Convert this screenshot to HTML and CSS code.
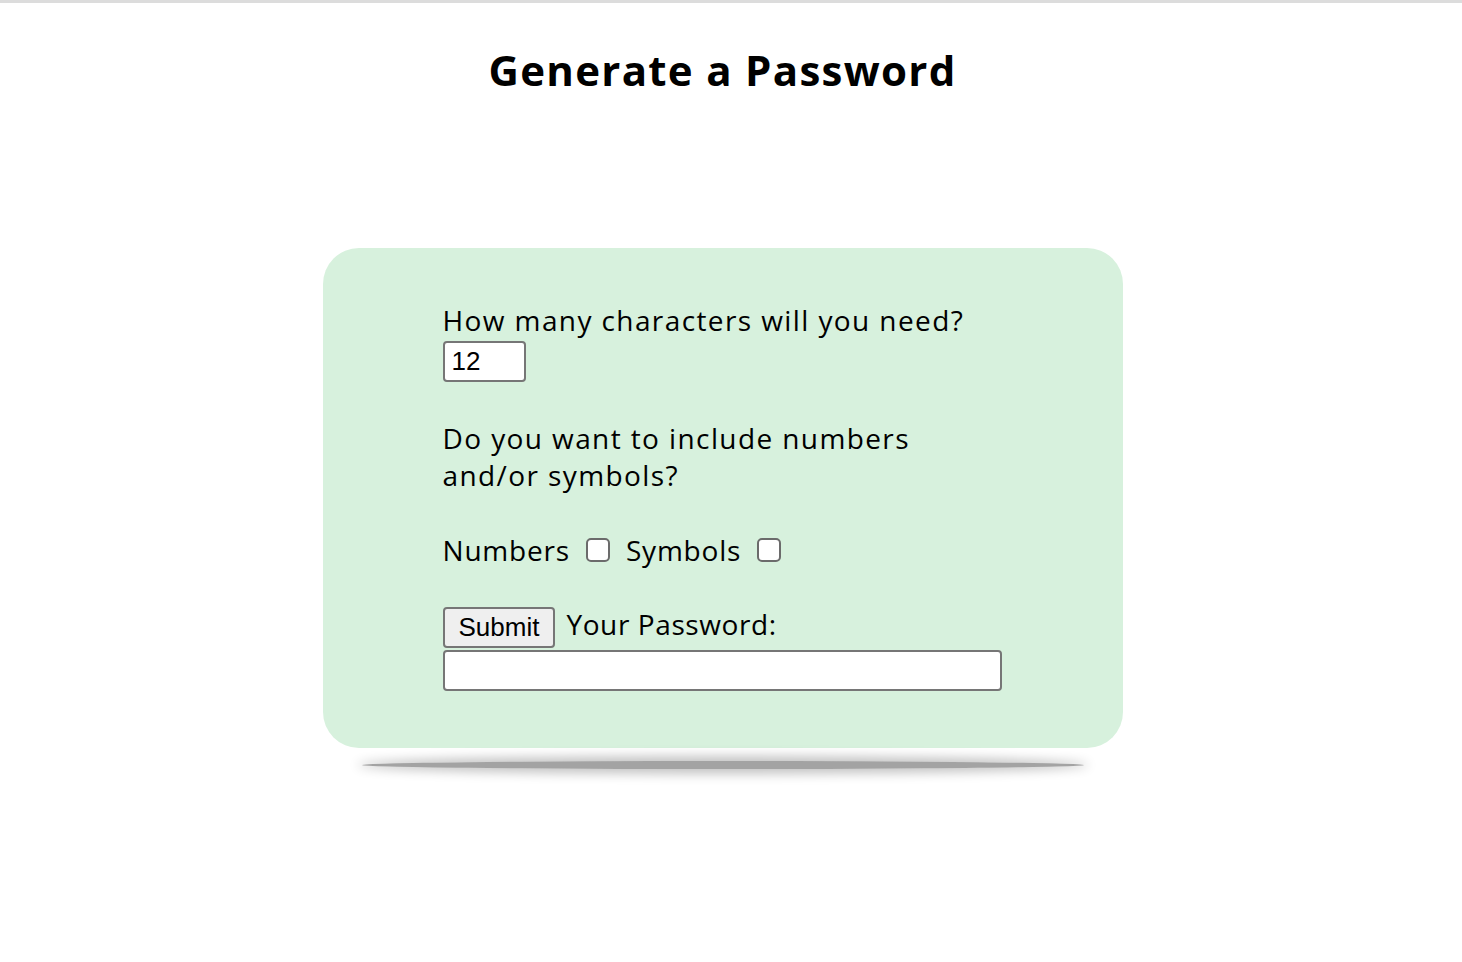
FILE: index.html
```html
<!DOCTYPE html>
<html lang="en">
<head>
<meta charset="utf-8">
<title>Generate a Password</title>
<link rel="stylesheet" href="styles.css">
</head>
<body>
<div class="topline"></div>
<div class="page">
  <h1 class="title">Generate a Password</h1>
  <main class="card">
    <form class="form" onsubmit="return false">
      <label class="question first" for="length">How many characters will you need?</label>
      <input class="num-input" id="length" type="text" value="12">
      <p class="question gap">Do you want to include numbers and/or symbols?</p>
      <div class="checks gap">
        <span>Numbers</span>
        <input class="check" type="checkbox">
        <span>Symbols</span>
        <input class="check" type="checkbox">
      </div>
      <div class="submit-row gap">
        <button class="submit-btn" type="button">Submit</button>
        <span class="pw-label">Your Password:</span>
      </div>
      <input class="pw-input" type="text">
    </form>
  </main>
  <div class="card-shadow"></div>
</div>
</body>
</html>
```

FILE: styles.css
```css
html {
  background: #ffffff;
}

body {
  margin: 0;
  padding: 0;
  min-height: 100vh;
  font-family: "Open Sans", "Noto Sans", sans-serif;
  color: #000;
}

.topline {
  height: 3px;
  background: #dcdcdc;
}

.page {
  padding: 0 17px 120px 0;
}

.title {
  margin: 42px 0 0;
  font-size: 42px;
  font-weight: 700;
  line-height: 50px;
  letter-spacing: 1.3px;
  text-align: center;
}

.card {
  box-sizing: border-box;
  width: 800px;
  margin: 153px auto 0;
  padding: 53px 120px 57px;
  background: #d7f1dd;
  border-radius: 36px;
}

.card-shadow {
  width: 722px;
  height: 8px;
  margin: 13px auto 0;
  border-radius: 50%;
  background: rgba(0, 0, 0, 0.36);
  box-shadow: 0 0 11px 5px rgba(0, 0, 0, 0.24);
}

.form {
  display: flex;
  flex-direction: column;
  align-items: flex-start;
}

.question {
  margin: 0;
  font-size: 28px;
  line-height: 37px;
  letter-spacing: 1.4px;
}

.first {
  padding-top: 1px;
}

.gap {
  margin-top: 38px;
}

.num-input,
.pw-input {
  box-sizing: border-box;
  height: 41px;
  margin: 2px 0 0;
  padding: 0 7px;
  border: 2px solid #767676;
  border-radius: 4px;
  background: #fff;
  font-family: "Liberation Sans", Arial, sans-serif;
  font-size: 26px;
  color: #000;
}

.num-input {
  width: 83px;
}

.pw-input {
  width: 559px;
  margin-top: 0;
}

.checks {
  display: flex;
  align-items: center;
  font-size: 28px;
  line-height: 37px;
  letter-spacing: 0.8px;
}

.check {
  appearance: none;
  box-sizing: border-box;
  width: 24px;
  height: 24px;
  margin: -2px 16px 0 16px;
  border: 2px solid #6b6b6b;
  border-radius: 5px;
  background: #fff;
}

.submit-row {
  display: flex;
  align-items: flex-start;
  height: 44px;
  margin-top: 37px;
}

.submit-btn {
  box-sizing: border-box;
  height: 41px;
  margin-top: 1px;
  padding: 0 14px;
  border: 2px solid #767676;
  border-radius: 4px;
  background: #efefef;
  font-family: "Liberation Sans", Arial, sans-serif;
  font-size: 26px;
  color: #000;
}

.pw-label {
  margin-left: 11px;
  font-size: 28px;
  line-height: 37px;
  letter-spacing: 0.6px;
}
```
